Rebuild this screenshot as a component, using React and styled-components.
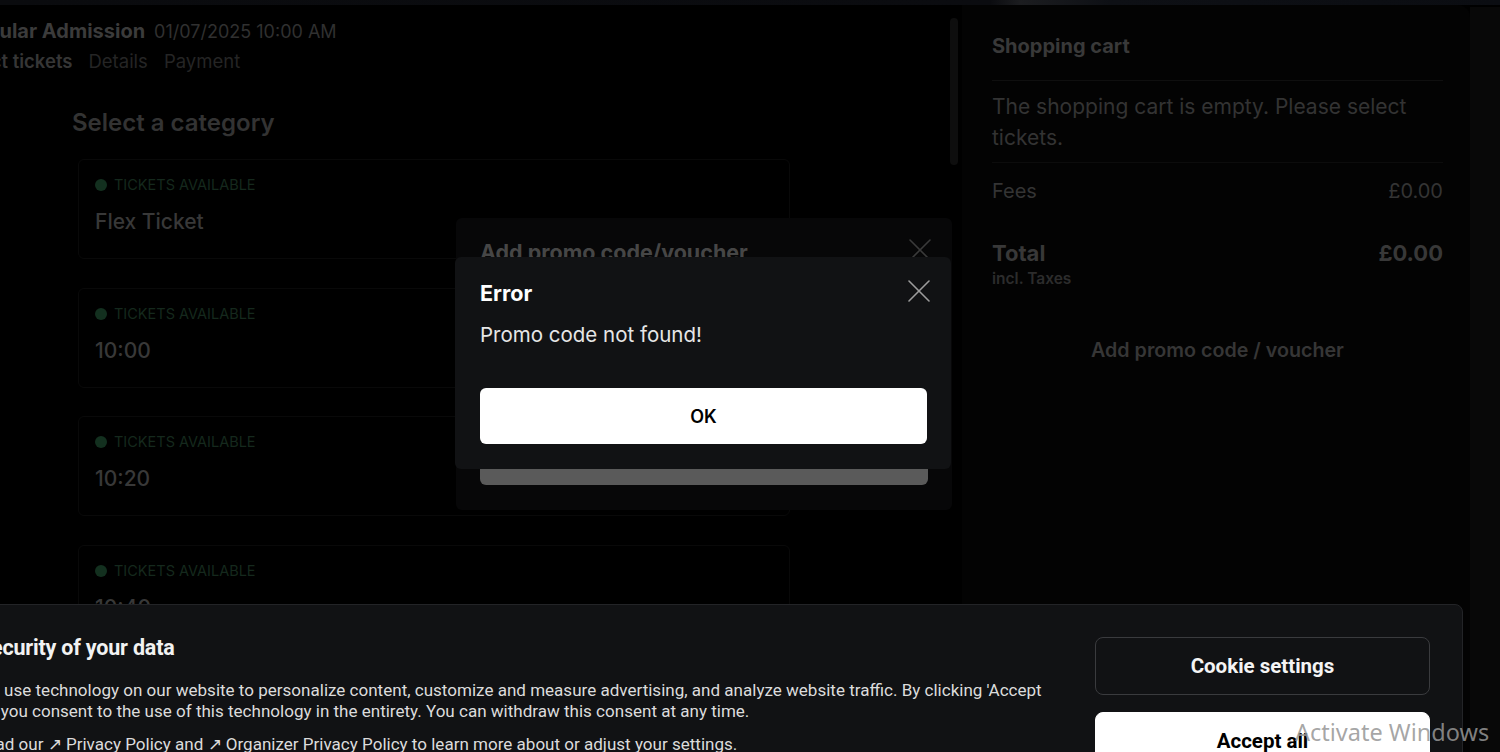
import React from "react";
import styled, { createGlobalStyle } from "styled-components";

const GlobalStyle = createGlobalStyle`
  * { box-sizing: border-box; }
  html, body { margin: 0; padding: 0; background: #000; }
  body { font-family: Inter, "Noto Sans", sans-serif; }
`;

const Screen = styled.div`
  position: relative;
  width: 1500px;
  height: 752px;
  overflow: hidden;
  background: #000;
  display: flex;
  flex-direction: column;
`;

const TopStrip = styled.div`
  height: 5px;
  flex: none;
  background: linear-gradient(90deg, #0a0b0e 0%, #0b0c10 66%, #1c1d20 68%, #0e1015 74%, #0b0d12 100%);
`;

const Body = styled.div`
  flex: 1;
  display: grid;
  grid-template-columns: 962px 508px 1fr;
  min-height: 0;
`;

const Main = styled.main`
  position: relative;
  padding-top: 14px;
`;

const EventHeader = styled.div`
  margin-left: -38px;
  display: flex;
  align-items: baseline;
  gap: 9px;
  height: 24px;
`;

const EventName = styled.h1`
  margin: 0;
  font-size: 20px;
  font-weight: 700;
  color: #3b3b3b;
`;

const EventDate = styled.span`
  font-size: 18px;
  color: #303030;
`;

const Steps = styled.nav`
  margin-left: -48px;
  margin-top: 7px;
  display: flex;
  gap: 16px;
`;

const Step = styled.span`
  font-size: 18.5px;
  font-weight: ${({ $active }) => ($active ? 600 : 400)};
  color: ${({ $active }) => ($active ? "#363636" : "#252525")};
`;

const Categories = styled.section`
  padding-left: 72px;
  margin-top: 36px;
`;

const SectionTitle = styled.h2`
  margin: 0 0 21px;
  font-size: 24px;
  font-weight: 600;
  color: #333;
  line-height: 30px;
`;

const CardList = styled.div`
  margin-left: 6px;
  width: 712px;
  display: flex;
  flex-direction: column;
  gap: 28.5px;
`;

const Card = styled.div`
  height: 100px;
  border: 1px solid #090909;
  border-radius: 6px;
  padding: 17px 16px;
`;

const Availability = styled.div`
  display: flex;
  align-items: center;
  gap: 7px;
  font-size: 14.5px;
  text-transform: uppercase;
  color: #15291d;
  line-height: 16px;
`;

const Dot = styled.span`
  width: 12px;
  height: 12px;
  border-radius: 50%;
  background: #13301f;
`;

const CardTitle = styled.div`
  margin-top: 15px;
  font-size: 21px;
  font-weight: 500;
  color: #383838;
  line-height: 28px;
`;

const ScrollThumb = styled.div`
  position: absolute;
  right: 4px;
  top: 13px;
  width: 8px;
  height: 147px;
  border-radius: 4px;
  background: #0e0e0e;
`;

const Cart = styled.aside`
  background: #030303;
  border-top-right-radius: 12px;
  padding: 26px 27px 0 30px;
`;

const CartTitle = styled.h2`
  margin: 0;
  font-size: 20px;
  font-weight: 700;
  color: #393939;
  line-height: 30px;
  padding-bottom: 19px;
  border-bottom: 1px solid #0f0f0f;
`;

const EmptyText = styled.p`
  margin: 0;
  padding: 10px 0 9px;
  font-size: 21px;
  line-height: 31px;
  color: #333;
  border-bottom: 1px solid #0c0c0c;
`;

const Row = styled.div`
  display: flex;
  justify-content: space-between;
  align-items: baseline;
  margin-top: ${({ $top }) => $top}px;
  font-size: ${({ $big }) => ($big ? 22 : 20)}px;
  font-weight: ${({ $big }) => ($big ? 700 : 400)};
  color: ${({ $big }) => ($big ? "#383838" : "#343434")};
  line-height: 28px;
`;

const TaxNote = styled.div`
  margin-top: 3px;
  font-size: 15.5px;
  font-weight: 600;
  color: #2c2c2c;
  line-height: 18px;
`;

const PromoLink = styled.div`
  margin-top: 50px;
  text-align: center;
  font-size: 19.7px;
  font-weight: 600;
  color: #363636;
`;

const SideRest = styled.div`
  background: #080808;
  margin-top: 2px;
`;

const Dialog = styled.div`
  position: absolute;
  left: ${({ $x }) => $x}px;
  top: ${({ $y }) => $y}px;
  width: 496px;
  height: ${({ $h }) => $h}px;
  border-radius: 6px;
  background: ${({ $bg }) => $bg};
  padding: ${({ $pad }) => $pad};
  display: flex;
  flex-direction: column;
`;

const DialogHead = styled.div`
  display: flex;
  justify-content: space-between;
  align-items: flex-start;
`;

const DialogTitle = styled.h3`
  margin: 0;
  font-size: 21.5px;
  font-weight: 700;
  line-height: 28px;
  color: ${({ $color }) => $color};
`;

const CloseBtn = styled.button`
  border: 0;
  background: none;
  padding: 0;
  width: 22px;
  height: 22px;
  margin: 1px -3px 0 0;
  display: flex;
  color: ${({ $color }) => $color};
`;

const Message = styled.p`
  margin: 14px 0 0;
  font-size: 20.5px;
  line-height: 28px;
  color: #e6e6e6;
`;

const WideButton = styled.button`
  width: 100%;
  height: 56px;
  border: 0;
  border-radius: 6px;
  font-family: Inter, sans-serif;
  font-size: 18px;
  font-weight: 600;
  color: #000;
  background: ${({ $bg }) => $bg};
  margin-top: ${({ $top }) => $top};
`;

const Banner = styled.section`
  position: absolute;
  left: -40px;
  right: 37px;
  top: 604px;
  height: 200px;
  background: #111214;
  border: 1px solid #232427;
  border-radius: 8px;
  padding: 32px 32px 0 15px;
  display: grid;
  grid-template-columns: 1fr 335px;
  gap: 40px;
  font-family: Roboto, "Liberation Sans", sans-serif;
`;

const BannerTitle = styled.h3`
  margin: -1px 0 0 2px;
  font-size: 21.5px;
  font-weight: 700;
  line-height: 24px;
  color: #f2f2f2;
  letter-spacing: -0.2px;
`;

const BannerText = styled.p`
  margin: ${({ $top }) => $top}px 0 0;
  font-size: 17.05px;
  line-height: 21px;
  color: #dcdcdc;
`;

const BannerActions = styled.div`
  display: flex;
  flex-direction: column;
  gap: 17px;
`;

const BannerButton = styled.button`
  height: 58px;
  border-radius: 8px;
  font-family: Roboto, "Liberation Sans", sans-serif;
  font-size: 20.5px;
  font-weight: 700;
  border: 1px solid ${({ $primary }) => ($primary ? "#fff" : "#3a3b3e")};
  background: ${({ $primary }) => ($primary ? "#fff" : "transparent")};
  color: ${({ $primary }) => ($primary ? "#000" : "#f4f4f4")};
`;

const Watermark = styled.div`
  position: absolute;
  left: 1295px;
  top: 716px;
  font-family: "Noto Sans", "Open Sans", sans-serif;
  font-size: 23.5px;
  color: rgba(150, 150, 150, 0.85);
  pointer-events: none;
`;

const CloseIcon = () => (
  <svg width="22" height="22" viewBox="0 0 22 22" fill="none" stroke="currentColor" strokeWidth="1.6" strokeLinecap="round">
    <line x1="1" y1="1" x2="21" y2="21" />
    <line x1="21" y1="1" x2="1" y2="21" />
  </svg>
);

const slots = ["Flex Ticket", "10:00", "10:20", "10:40"];

export default function App() {
  return (
    <>
      <GlobalStyle />
      <Screen>
        <TopStrip />
        <Body>
          <Main>
            <EventHeader>
              <EventName>Regular Admission</EventName>
              <EventDate>01/07/2025 10:00 AM</EventDate>
            </EventHeader>
            <Steps>
              <Step $active>Select tickets</Step>
              <Step>Details</Step>
              <Step>Payment</Step>
            </Steps>
            <Categories>
              <SectionTitle>Select a category</SectionTitle>
              <CardList>
                {slots.map((s) => (
                  <Card key={s}>
                    <Availability>
                      <Dot />
                      Tickets available
                    </Availability>
                    <CardTitle>{s}</CardTitle>
                  </Card>
                ))}
              </CardList>
            </Categories>
            <ScrollThumb />
          </Main>
          <Cart>
            <CartTitle>Shopping cart</CartTitle>
            <EmptyText>The shopping cart is empty. Please select tickets.</EmptyText>
            <Row $top={14}>
              <span>Fees</span>
              <span>£0.00</span>
            </Row>
            <Row $big $top={34}>
              <span>Total</span>
              <span>£0.00</span>
            </Row>
            <TaxNote>incl. Taxes</TaxNote>
            <PromoLink>Add promo code / voucher</PromoLink>
          </Cart>
          <SideRest />
        </Body>

        <Dialog $x={456} $y={218} $h={292} $bg="#070708" $pad="20px 24px 25px">
          <DialogHead>
            <DialogTitle $color="#464646">Add promo code/voucher</DialogTitle>
            <CloseBtn $color="#3a3a3a">
              <CloseIcon />
            </CloseBtn>
          </DialogHead>
          <WideButton $bg="#5a5a5a" $top="auto">Apply</WideButton>
        </Dialog>

        <Dialog $x={455} $y={257} $h={212} $bg="#111214" $pad="22px 24px 25px 25px">
          <DialogHead>
            <DialogTitle $color="#ffffff">Error</DialogTitle>
            <CloseBtn $color="#9c9c9c">
              <CloseIcon />
            </CloseBtn>
          </DialogHead>
          <Message>Promo code not found!</Message>
          <WideButton $bg="#ffffff" $top="39px">OK</WideButton>
        </Dialog>

        <Banner>
          <div>
            <BannerTitle>Security of your data</BannerTitle>
            <BannerText $top={20}>
              We use technology on our website to personalize content, customize and measure advertising, and analyze website traffic. By clicking 'Accept all' you consent to the use of this technology in the entirety. You can withdraw this consent at any time.
            </BannerText>
            <BannerText $top={12}>
              Read our ↗ Privacy Policy and ↗ Organizer Privacy Policy to learn more about or adjust your settings.
            </BannerText>
          </div>
          <BannerActions>
            <BannerButton>Cookie settings</BannerButton>
            <BannerButton $primary>Accept all</BannerButton>
          </BannerActions>
        </Banner>

        <Watermark>Activate Windows</Watermark>
      </Screen>
    </>
  );
}
